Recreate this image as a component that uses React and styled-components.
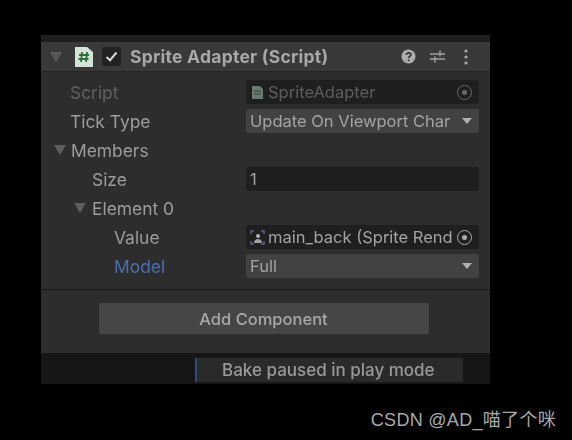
import React from "react";
import styled, { createGlobalStyle } from "styled-components";

const GlobalStyle = createGlobalStyle`
  html, body {
    margin: 0;
    height: 100%;
    background: #000;
    overflow: hidden;
  }
  body {
    font-family: Inter, "Liberation Sans", sans-serif;
  }
`;

const Page = styled.div`
  width: 572px;
  height: 440px;
  padding: 35px 0 0 41px;
  box-sizing: border-box;
`;

const Window = styled.div`
  width: 449px;
  background: #2d2d2d;
  border-top: 7px solid #1e1e1e;
  filter: blur(0.7px);
`;

const Header = styled.div`
  height: 29px;
  display: flex;
  align-items: center;
  padding: 0 21px 0 9px;
  background: #393939;
  border-bottom: 1px solid #252525;
`;

const Arrow = styled.span`
  display: block;
  width: 0;
  height: 0;
  flex: none;
  border-left: 6px solid transparent;
  border-right: 6px solid transparent;
  border-top: 10px solid ${(p) => p.$color || "#6d6d6d"};
  margin-right: ${(p) => p.$gap ?? 4}px;
`;

const ScriptIcon = styled.svg`
  width: 18px;
  height: 21px;
  flex: none;
  margin-right: 9px;
`;

const Check = styled.span`
  width: 19px;
  height: 19px;
  flex: none;
  border-radius: 3px;
  background: #222;
  display: flex;
  align-items: center;
  justify-content: center;
  margin-right: 9px;
`;

const Title = styled.span`
  flex: 1;
  font-size: 17.5px;
  font-weight: 700;
  letter-spacing: 0.25px;
  color: #a8a8a8;
  white-space: nowrap;
`;

const HeaderIcons = styled.div`
  display: flex;
  align-items: center;
  gap: 14px;
`;

const Body = styled.div`
  padding: 8px 11px 11px 0;
  border-bottom: 1px solid #1c1c1c;
  display: flex;
  flex-direction: column;
  gap: 5px;
`;

const Row = styled.div`
  height: 24px;
  display: flex;
  align-items: center;
`;

const Label = styled.div`
  width: 205px;
  box-sizing: border-box;
  padding-left: ${(p) => p.$indent}px;
  display: flex;
  align-items: center;
  flex: none;
  font-size: 17.4px;
  color: ${(p) => p.$color || "#9c9c9c"};
  white-space: nowrap;
`;

const Field = styled.div`
  flex: 1;
  min-width: 0;
  height: 24px;
  box-sizing: border-box;
  border-radius: 3px;
  display: flex;
  align-items: center;
  padding: 0 7px 0 4px;
  font-size: 16.5px;
  white-space: nowrap;
  background: ${(p) => (p.$popup ? "#424242" : "#1f1f1f")};
  color: ${(p) => p.$color || "#a3a3a3"};
`;

const FieldText = styled.span`
  flex: 1;
  min-width: 0;
`;

const Caret = styled.span`
  width: 0;
  height: 0;
  flex: none;
  margin-left: 3px;
  border-left: 5px solid transparent;
  border-right: 5px solid transparent;
  border-top: 6px solid #b0b0b0;
`;

const Target = styled.span`
  width: 15px;
  height: 15px;
  flex: none;
  box-sizing: border-box;
  margin-left: 4px;
  border-radius: 50%;
  border: 1.5px solid ${(p) => p.$color};
  display: flex;
  align-items: center;
  justify-content: center;
  &::after {
    content: "";
    width: 5px;
    height: 5px;
    border-radius: 50%;
    background: ${(p) => p.$color};
  }
`;

const FieldIcon = styled.svg`
  width: 15px;
  height: 15px;
  flex: none;
  margin-right: 3px;
`;

const Footer = styled.div`
  height: 63px;
  display: flex;
  align-items: flex-start;
  justify-content: center;
  padding: 13px 4px 0 0;
  box-sizing: border-box;
`;

const AddButton = styled.div`
  width: 330px;
  height: 31px;
  border-radius: 2px;
  background: #464646;
  color: #a8a8a8;
  font-size: 16.5px;
  font-weight: 500;
  display: flex;
  align-items: center;
  justify-content: center;
`;

const StatusBar = styled.div`
  height: 31px;
  background: #161616;
  padding: 5px 27px 2px 154px;
  box-sizing: border-box;
  display: flex;
`;

const StatusLabel = styled.div`
  flex: 1;
  background: #2a2a2a;
  border-left: 2px solid #2c4a7c;
  color: #999999;
  font-size: 17px;
  font-weight: 500;
  padding-left: 25px;
  display: flex;
  align-items: center;
  white-space: nowrap;
`;

const Watermark = styled.div`
  margin: 25px 16px 0 0;
  text-align: right;
  font-family: "Liberation Sans", "Noto Sans CJK SC", sans-serif;
  font-size: 18px;
  letter-spacing: 0.3px;
  line-height: 22px;
  color: #a8a8a8;
  white-space: nowrap;
`;

function App() {
  return (
    <Page>
      <GlobalStyle />
      <Window>
        <Header>
          <Arrow $color="#5a5a5a" $gap={13} />
          <ScriptIcon viewBox="0 0 18 21">
            <path d="M0 1h12l6 5v15H0z" fill="#d5e4d8" />
            <path
              d="M7 6 6 16M12 6l-1 10M4 9h10M3.5 13h10"
              stroke="#2a7236"
              strokeWidth="1.8"
              fill="none"
            />
          </ScriptIcon>
          <Check>
            <svg width="13" height="11" viewBox="0 0 13 11">
              <path d="M1.5 6 5 9.2 11.5 1.5" stroke="#d8d8d8" strokeWidth="2" fill="none" />
            </svg>
          </Check>
          <Title>Sprite Adapter (Script)</Title>
          <HeaderIcons>
            <svg width="15" height="15" viewBox="0 0 15 15">
              <circle cx="7.5" cy="7.5" r="7" fill="#adadad" />
              <path
                d="M5.2 5.8c.2-1.5 1.3-2 2.4-2 1.3 0 2.3.8 2.3 1.9 0 1.6-2.2 1.6-2.2 3.2"
                stroke="#393939"
                strokeWidth="1.7"
                fill="none"
              />
              <circle cx="7.7" cy="11.3" r="1" fill="#393939" />
            </svg>
            <svg width="15" height="15" viewBox="0 0 15 15">
              <path
                d="M0 5h15M0 10h15M10 1.5v6M5 7.5v6"
                stroke="#a0a0a0"
                strokeWidth="1.5"
                fill="none"
              />
            </svg>
            <svg width="6" height="16" viewBox="0 0 6 16" style={{ marginLeft: 4 }}>
              <circle cx="3" cy="2" r="1.6" fill="#a8a8a8" />
              <circle cx="3" cy="8" r="1.6" fill="#a8a8a8" />
              <circle cx="3" cy="14" r="1.6" fill="#a8a8a8" />
            </svg>
          </HeaderIcons>
        </Header>
        <Body>
          <Row>
            <Label $indent={29} $color="#606060">Script</Label>
            <Field $color="#5e5e5e">
              <FieldIcon viewBox="0 0 15 15">
                <path d="M2 1h8l3 3v10H2z" fill="#6b7a70" />
                <path d="M4 6h7M4 9h7" stroke="#3a443d" strokeWidth="1.2" />
              </FieldIcon>
              <FieldText>SpriteAdapter</FieldText>
              <Target $color="#686868" />
            </Field>
          </Row>
          <Row>
            <Label $indent={29}>Tick Type</Label>
            <Field $popup>
              <FieldText>Update On Viewport Char</FieldText>
              <Caret />
            </Field>
          </Row>
          <Row>
            <Label $indent={13}>
              <Arrow $color="#5e5e5e" $gap={5} />
              Members
            </Label>
          </Row>
          <Row>
            <Label $indent={51}>Size</Label>
            <Field>1</Field>
          </Row>
          <Row>
            <Label $indent={33}>
              <Arrow $color="#5e5e5e" $gap={6} />
              Element 0
            </Label>
          </Row>
          <Row>
            <Label $indent={73}>Value</Label>
            <Field>
              <FieldIcon viewBox="0 0 15 15">
                <path
                  d="M1 4V1h3M11 1h3v3M1 11v3h3M11 14h3v-3"
                  stroke="#5d5d8a"
                  strokeWidth="1.6"
                  fill="none"
                />
                <circle cx="8" cy="6" r="2" fill="#b5b5b5" />
                <path d="M4 13c0-3 2-4 4-4s4 1 4 4z" fill="#a0a0a0" />
              </FieldIcon>
              <FieldText>main_back (Sprite Rend</FieldText>
              <Target $color="#adadad" />
            </Field>
          </Row>
          <Row>
            <Label $indent={73} $color="#4a6fae">Model</Label>
            <Field $popup>
              <FieldText>Full</FieldText>
              <Caret />
            </Field>
          </Row>
        </Body>
        <Footer>
          <AddButton>Add Component</AddButton>
        </Footer>
        <StatusBar>
          <StatusLabel>Bake paused in play mode</StatusLabel>
        </StatusBar>
      </Window>
      <Watermark>CSDN @AD_喵了个咪</Watermark>
    </Page>
  );
}

export default App;
